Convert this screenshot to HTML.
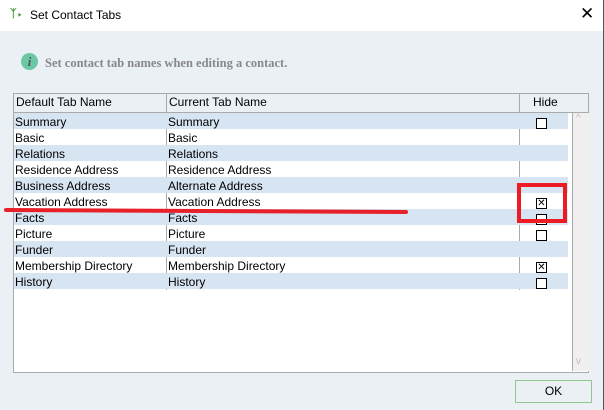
<!DOCTYPE html><html><head><style>
body{margin:0;width:604px;height:410px;overflow:hidden;font-family:"Liberation Sans",sans-serif;font-size:12px;position:relative;background:#ebf0f5}
.a{position:absolute}
.row{position:absolute;left:14px;width:554px;height:16px}
.row span{position:absolute;top:2px;color:#000}
.cb{position:absolute;left:536px;width:9px;height:9px;border:1px solid #000;background:#fff}
</style></head><body>
<div class="a" style="left:0;top:0;width:604px;height:31px;background:#fff"></div>
<div class="a" style="left:603px;top:0;width:1px;height:410px;background:#555"></div>
<div class="a" style="left:10px;top:8px;color:#3a9a2a;font-size:11px;font-weight:bold">ᛉ▸</div>
<div class="a" style="left:30px;top:8px;font-size:12px">Set Contact Tabs</div>
<div class="a" style="left:580px;top:4px;font-size:17px">✕</div>
<div class="a" style="left:21px;top:53px;width:17px;height:17px;border-radius:50%;background:#6cc7a5;color:#555;font:italic bold 13px 'Liberation Serif',serif;text-align:center;line-height:17px">i</div>
<div class="a" style="left:45px;top:56px;font:bold 12.5px 'Liberation Serif',serif;color:#888">Set contact tab names when editing a contact.</div>
<div class="a" style="left:13px;top:93px;width:574px;height:278px;border:1px solid #aaa;background:#fff"></div>
<div class="a" style="left:14px;top:94px;width:574px;height:18px;background:#ebf0f5;border-bottom:1px solid #aaa"></div>
<div class="a" style="left:166px;top:94px;width:1px;height:19px;background:#aaa"></div>
<div class="a" style="left:519px;top:94px;width:1px;height:196px;background:#aaa"></div>
<div class="a" style="left:166px;top:113px;width:1px;height:177px;background:#aaa"></div>
<div class="a" style="left:16px;top:95px">Default Tab Name</div>
<div class="a" style="left:169px;top:95px">Current Tab Name</div>
<div class="a" style="left:533px;top:95px">Hide</div>
<div class="a" style="left:572px;top:113px;width:16px;height:258px;background:#f0f0f0;border-left:1px solid #aaa"></div>
<div class="a" style="left:576px;top:113px;color:#bbb;font-size:10px">^</div>
<div class="a" style="left:576px;top:356px;color:#bbb;font-size:10px">v</div>
<div class="row" style="top:113px;background:#d7e4f1"><span style="left:1px">Summary</span><span style="left:154px">Summary</span><div class="cb" style="left:522px;top:5px"></div></div>
<div class="row" style="top:129px"><span style="left:1px">Basic</span><span style="left:154px">Basic</span></div>
<div class="row" style="top:145px;background:#d7e4f1"><span style="left:1px">Relations</span><span style="left:154px">Relations</span></div>
<div class="row" style="top:161px"><span style="left:1px">Residence Address</span><span style="left:154px">Residence Address</span></div>
<div class="row" style="top:177px;background:#d7e4f1"><span style="left:1px">Business Address</span><span style="left:154px">Alternate Address</span></div>
<div class="row" style="top:193px"><span style="left:1px">Vacation Address</span><span style="left:154px">Vacation Address</span><div class="cb" style="left:522px;top:5px;font-size:10px;line-height:9px;text-align:center">✕</div></div>
<div class="row" style="top:209px;background:#d7e4f1"><span style="left:1px">Facts</span><span style="left:154px">Facts</span><div class="cb" style="left:522px;top:5px"></div></div>
<div class="row" style="top:225px"><span style="left:1px">Picture</span><span style="left:154px">Picture</span><div class="cb" style="left:522px;top:5px"></div></div>
<div class="row" style="top:241px;background:#d7e4f1"><span style="left:1px">Funder</span><span style="left:154px">Funder</span></div>
<div class="row" style="top:257px"><span style="left:1px">Membership Directory</span><span style="left:154px">Membership Directory</span><div class="cb" style="left:522px;top:5px;font-size:10px;line-height:9px;text-align:center">✕</div></div>
<div class="row" style="top:273px;background:#d7e4f1"><span style="left:1px">History</span><span style="left:154px">History</span><div class="cb" style="left:522px;top:5px"></div></div>
<svg class="a" style="left:0;top:0" width="604" height="410"><path d="M6 210 L406 212" stroke="#e8202a" stroke-width="4" stroke-linecap="round"/></svg>
<div class="a" style="left:517px;top:183px;width:42px;height:32px;border:4px solid #ed1c24"></div>
<div class="a" style="left:515px;top:380px;width:75px;height:21px;border:1px solid #8fc98f;background:#ebf0f5;text-align:center;line-height:21px">OK</div>
</body></html>
